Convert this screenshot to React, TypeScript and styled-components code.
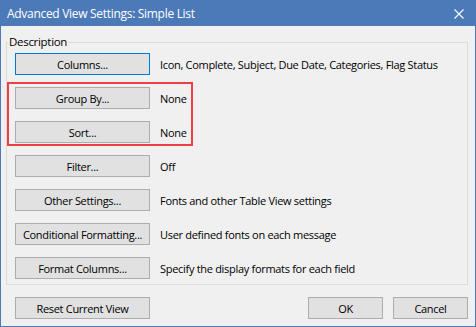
import React from 'react';
import styled, { createGlobalStyle } from 'styled-components';

const GlobalStyle = createGlobalStyle`
  html, body {
    margin: 0;
    padding: 0;
    background: #f0f0f0;
  }
  body {
    font-family: 'Open Sans', 'Noto Sans', sans-serif;
    font-size: 11px;
    letter-spacing: -0.3px;
    color: #000;
  }
`;

const rows = [
  { label: 'Columns...', text: 'Icon, Complete, Subject, Due Date, Categories, Flag Status', focused: true },
  { label: 'Group By...', text: 'None', marked: true },
  { label: 'Sort...', text: 'None', marked: true },
  { label: 'Filter...', text: 'Off' },
  { label: 'Other Settings...', text: 'Fonts and other Table View settings' },
  { label: 'Conditional Formatting...', text: 'User defined fonts on each message' },
  { label: 'Format Columns...', text: 'Specify the display formats for each field' },
];

const CloseIcon = () => (
  <svg width="10" height="10" viewBox="0 0 10 10">
    <path d="M0.5 0.5 L9.5 9.5 M9.5 0.5 L0.5 9.5" stroke="#fff" strokeWidth="1.1" />
  </svg>
);

const App = () => {
  const plain = rows.slice(0, 1);
  const marked = rows.filter((r) => r.marked);
  const rest = rows.slice(3);

  const renderRow = (r: typeof rows[number]) => (
    <Row key={r.label}>
      <DialogButton $focused={r.focused}>{r.label}</DialogButton>
      <RowText>{r.text}</RowText>
    </Row>
  );

  return (
    <>
      <GlobalStyle />
      <Window>
        <TitleBar>
          <Title>Advanced View Settings: Simple List</Title>
          <CloseButton>
            <CloseIcon />
          </CloseButton>
        </TitleBar>
        <Body>
          <GroupBox>
            <Legend>Description</Legend>
            <Rows>
              {plain.map(renderRow)}
              <Highlight>{marked.map(renderRow)}</Highlight>
              {rest.map(renderRow)}
            </Rows>
          </GroupBox>
          <Footer>
            <DialogButton>Reset Current View</DialogButton>
            <FooterRight>
              <DialogButton $width={75}>OK</DialogButton>
              <DialogButton $width={75}>Cancel</DialogButton>
            </FooterRight>
          </Footer>
        </Body>
      </Window>
    </>
  );
};

export default App;

const Window = styled.div`
  width: 476px;
  height: 327px;
  box-sizing: border-box;
  border: 1px solid #4c7ab8;
  border-top: none;
  display: flex;
  flex-direction: column;
  background: #f0f0f0;
`;

const TitleBar = styled.div`
  height: 26px;
  margin: 0 -1px;
  background: #4c7ab8;
  display: flex;
  align-items: center;
  justify-content: space-between;
  padding: 0 12px 0 7px;
`;

const Title = styled.span`
  color: #fff;
  font-size: 12px;
  line-height: 16px;
  margin-top: 1px;
`;

const CloseButton = styled.span`
  display: flex;
  align-items: center;
  margin-top: 1px;
`;

const Body = styled.div`
  flex: 1;
  display: flex;
  flex-direction: column;
  padding: 8px 7px 0 5px;
`;

const GroupBox = styled.fieldset`
  margin: 0;
  padding: 3px 0 5px 8px;
  border: 1px solid #dcdcdc;
  min-width: 0;
`;

const Legend = styled.legend`
  padding: 0 1px;
  margin-left: -7px;
  line-height: 16px;
  font-size: 11.5px;
`;

const Rows = styled.div`
  display: flex;
  flex-direction: column;
  gap: 12px;
`;

const Highlight = styled.div`
  position: relative;
  display: flex;
  flex-direction: column;
  gap: 12px;

  &::after {
    content: '';
    position: absolute;
    left: -8px;
    top: -5px;
    width: 186px;
    height: 64px;
    box-sizing: border-box;
    border: 2px solid #ee4040;
    pointer-events: none;
  }
`;

const Row = styled.div`
  display: flex;
  align-items: center;
  gap: 10px;
`;

const DialogButton = styled.button<{ $focused?: boolean; $width?: number }>`
  width: ${(p) => p.$width ?? 135}px;
  height: 22px;
  box-sizing: border-box;
  padding: 0;
  background: #e1e1e1;
  border: 1px solid ${(p) => (p.$focused ? '#0078d7' : '#adadad')};
  font-family: inherit;
  font-size: inherit;
  letter-spacing: inherit;
  color: #000;
  text-align: center;
  flex-shrink: 0;
`;

const RowText = styled.span`
  white-space: nowrap;
`;

const Footer = styled.div`
  display: flex;
  justify-content: space-between;
  margin-top: 12px;
  padding-left: 9px;
`;

const FooterRight = styled.div`
  display: flex;
  gap: 10px;
`;
